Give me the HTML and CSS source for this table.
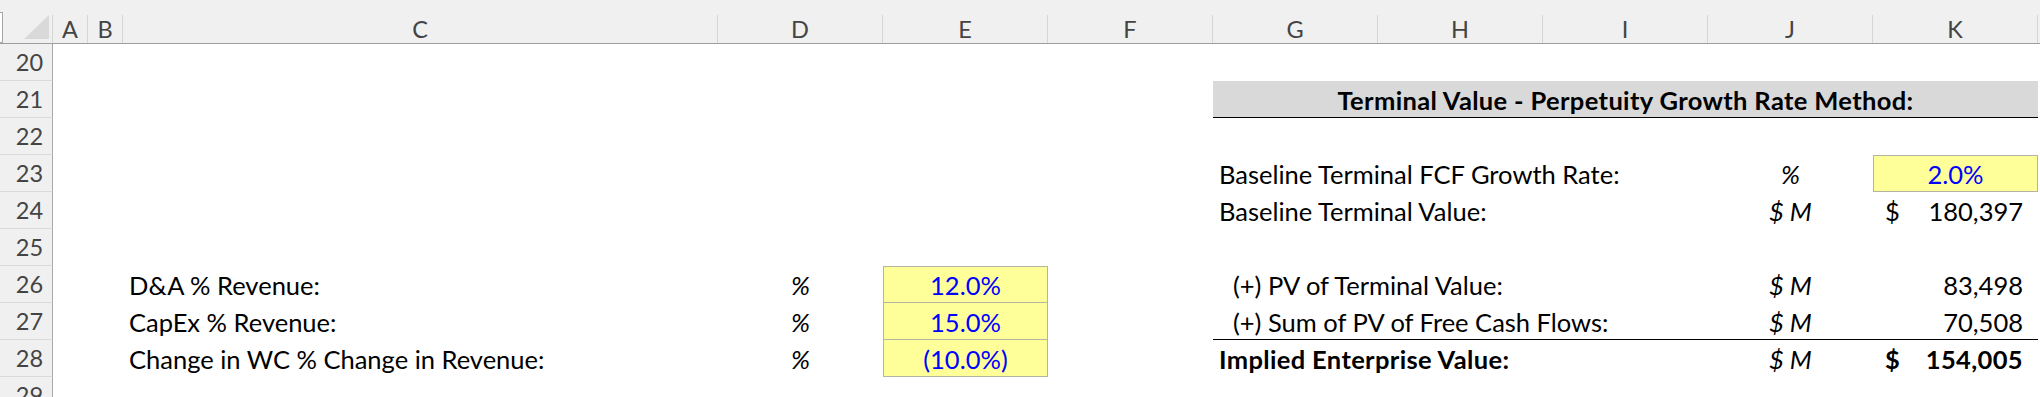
FILE: index.html
```html
<!DOCTYPE html>
<html>
<head>
<meta charset="utf-8">
<link rel="stylesheet" href="styles.css">
</head>
<body>
<div class="sheet">
  <div class="namebox"></div>
  <div class="chrome"></div>
  <div class="grid colhead">
    <div class="corner"><div class="tri"></div></div>
    <div class="ch">A</div>
    <div class="ch">B</div>
    <div class="ch">C</div>
    <div class="ch">D</div>
    <div class="ch">E</div>
    <div class="ch">F</div>
    <div class="ch">G</div>
    <div class="ch">H</div>
    <div class="ch">I</div>
    <div class="ch">J</div>
    <div class="ch">K</div>
  </div>

  <div class="grid row"><div class="rh">20</div></div>

  <div class="grid row">
    <div class="rh">21</div>
    <div class="c cGK title">Terminal Value - Perpetuity Growth Rate Method:</div>
  </div>

  <div class="grid row"><div class="rh">22</div></div>

  <div class="grid row">
    <div class="rh">23</div>
    <div class="c cG">Baseline Terminal FCF Growth Rate:</div>
    <div class="c cJ unit">%</div>
    <div class="c cK inp">2.0%</div>
  </div>

  <div class="grid row">
    <div class="rh">24</div>
    <div class="c cG">Baseline Terminal Value:</div>
    <div class="c cJ unit">$ M</div>
    <div class="c cK acct"><span>$</span><span>180,397</span></div>
  </div>

  <div class="grid row"><div class="rh">25</div></div>

  <div class="grid row">
    <div class="rh">26</div>
    <div class="c cC">D&amp;A % Revenue:</div>
    <div class="c cD unit">%</div>
    <div class="c cE inp">12.0%</div>
    <div class="c cG indent">(+) PV of Terminal Value:</div>
    <div class="c cJ unit">$ M</div>
    <div class="c cK num">83,498</div>
  </div>

  <div class="grid row">
    <div class="rh">27</div>
    <div class="c cC">CapEx % Revenue:</div>
    <div class="c cD unit">%</div>
    <div class="c cE inp stack">15.0%</div>
    <div class="c cG indent rule">(+) Sum of PV of Free Cash Flows:</div>
    <div class="c cJ unit rule">$ M</div>
    <div class="c cK num rule">70,508</div>
  </div>

  <div class="grid row">
    <div class="rh">28</div>
    <div class="c cC">Change in WC % Change in Revenue:</div>
    <div class="c cD unit">%</div>
    <div class="c cE inp stack">(10.0%)</div>
    <div class="c cG bold">Implied Enterprise Value:</div>
    <div class="c cJ unit">$ M</div>
    <div class="c cK acct bold"><span>$</span><span>154,005</span></div>
  </div>

  <div class="grid row"><div class="rh">29</div></div>
</div>
</body>
</html>
```

FILE: styles.css
```css
* { box-sizing: border-box; margin: 0; padding: 0; }

body {
  margin: 0;
  width: 2040px;
  height: 397px;
  overflow: hidden;
  background: #ffffff;
  font-family: Lato, "Liberation Sans", sans-serif;
  color: #000;
}

.sheet {
  position: relative;
  width: 2040px;
  height: 397px;
  overflow: hidden;
  background: #ffffff;
}

.namebox {
  position: absolute;
  left: -12px;
  top: 12px;
  width: 15px;
  height: 31px;
  background: #ffffff;
  border: 1px solid #a6a6a6;
}

.chrome {
  height: 15px;
  background: #f0f0f0;
}

.grid {
  display: grid;
  grid-template-columns: 53px 35px 35px 595px repeat(8, 165px);
}

.colhead {
  height: 29px;
  background: #f0f0f0;
  border-bottom: 1px solid #9e9e9e;
}

.corner {
  display: flex;
  justify-content: flex-end;
  align-items: flex-end;
  padding: 0 3px 4px 0;
  border-right: 1px solid #d6d6d6;
}

.tri {
  width: 25px;
  height: 24px;
  background: #d9d9d9;
  clip-path: polygon(100% 0, 100% 100%, 0 100%);
}

.ch {
  display: flex;
  align-items: center;
  justify-content: center;
  border-right: 1px solid #d6d6d6;
  color: #444;
  font-size: 23.5px;
  line-height: 1;
  padding-top: 1px;
}

.row {
  height: 37px;
  grid-template-rows: 37px;
}

.row > * { grid-row: 1; }

.rh {
  grid-column: 1;
  background: #f0f0f0;
  border-right: 1px solid #a8a8a8;
  border-bottom: 1px solid #dadada;
  color: #444;
  font-size: 23.5px;
  line-height: 1;
  display: flex;
  align-items: flex-end;
  justify-content: center;
  padding: 0 0 6px 7px;
}

.c {
  display: flex;
  align-items: flex-end;
  font-size: 25.5px;
  line-height: 30px;
  padding: 0 6px 3px;
  white-space: nowrap;
}

.cC { grid-column: 4; }
.cD { grid-column: 5; }
.cE { grid-column: 6; }
.cG { grid-column: 8 / span 3; }
.cJ { grid-column: 11; }
.cK { grid-column: 12; }
.cGK { grid-column: 8 / span 5; }

.title {
  justify-content: center;
  background: #d9d9d9;
  border-bottom: 1px solid #000;
  font-weight: 700;
  letter-spacing: 0.35px;
  padding-bottom: 2px;
}

.unit {
  justify-content: center;
  font-style: italic;
}

.inp {
  justify-content: center;
  background: #ffff99;
  border: 1px solid #b4b4a2;
  color: #0000ff;
  padding-bottom: 2px;
}

.inp.stack { border-top: none; }

.acct {
  justify-content: space-between;
  padding-left: 12px;
  padding-right: 15px;
}

.num {
  justify-content: flex-end;
  padding-right: 15px;
}

.indent { padding-left: 20px; }

.rule {
  border-bottom: 1px solid #000;
  padding-bottom: 2px;
}

.bold {
  font-weight: 700;
  letter-spacing: 0.35px;
}
```
